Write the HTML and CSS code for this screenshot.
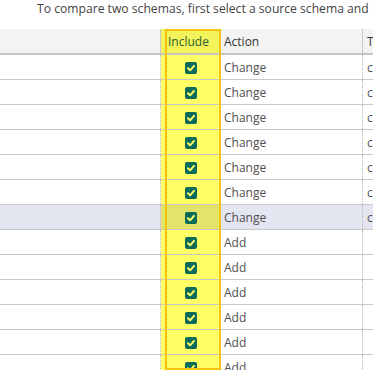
FILE: index.html
```html
<!DOCTYPE html>
<html>
<head>
<meta charset="utf-8">
<link rel="stylesheet" href="styles.css">
</head>
<body>
<div class="page">
  <p class="intro">To compare two schemas, first select a source schema and</p>
  <div class="grid-wrap">
    <div class="row head">
      <div class="cell c-name"></div>
      <div class="cell c-inc">Include</div>
      <div class="cell c-act">Action</div>
      <div class="cell c-type">T</div>
    </div>
    <div class="row"><div class="cell c-name"></div><div class="cell c-inc"><span class="chk"><svg viewBox="0 0 12 12"><path d="M3 6.3 L5.1 8.3 L9 3.9"/></svg></span></div><div class="cell c-act">Change</div><div class="cell c-type">c</div></div>
    <div class="row"><div class="cell c-name"></div><div class="cell c-inc"><span class="chk"><svg viewBox="0 0 12 12"><path d="M3 6.3 L5.1 8.3 L9 3.9"/></svg></span></div><div class="cell c-act">Change</div><div class="cell c-type">c</div></div>
    <div class="row"><div class="cell c-name"></div><div class="cell c-inc"><span class="chk"><svg viewBox="0 0 12 12"><path d="M3 6.3 L5.1 8.3 L9 3.9"/></svg></span></div><div class="cell c-act">Change</div><div class="cell c-type">c</div></div>
    <div class="row"><div class="cell c-name"></div><div class="cell c-inc"><span class="chk"><svg viewBox="0 0 12 12"><path d="M3 6.3 L5.1 8.3 L9 3.9"/></svg></span></div><div class="cell c-act">Change</div><div class="cell c-type">c</div></div>
    <div class="row"><div class="cell c-name"></div><div class="cell c-inc"><span class="chk"><svg viewBox="0 0 12 12"><path d="M3 6.3 L5.1 8.3 L9 3.9"/></svg></span></div><div class="cell c-act">Change</div><div class="cell c-type">c</div></div>
    <div class="row"><div class="cell c-name"></div><div class="cell c-inc"><span class="chk"><svg viewBox="0 0 12 12"><path d="M3 6.3 L5.1 8.3 L9 3.9"/></svg></span></div><div class="cell c-act">Change</div><div class="cell c-type">c</div></div>
    <div class="row selected"><div class="cell c-name"></div><div class="cell c-inc"><span class="chk"><svg viewBox="0 0 12 12"><path d="M3 6.3 L5.1 8.3 L9 3.9"/></svg></span></div><div class="cell c-act">Change</div><div class="cell c-type">c</div></div>
    <div class="row"><div class="cell c-name"></div><div class="cell c-inc"><span class="chk"><svg viewBox="0 0 12 12"><path d="M3 6.3 L5.1 8.3 L9 3.9"/></svg></span></div><div class="cell c-act">Add</div><div class="cell c-type"></div></div>
    <div class="row"><div class="cell c-name"></div><div class="cell c-inc"><span class="chk"><svg viewBox="0 0 12 12"><path d="M3 6.3 L5.1 8.3 L9 3.9"/></svg></span></div><div class="cell c-act">Add</div><div class="cell c-type"></div></div>
    <div class="row"><div class="cell c-name"></div><div class="cell c-inc"><span class="chk"><svg viewBox="0 0 12 12"><path d="M3 6.3 L5.1 8.3 L9 3.9"/></svg></span></div><div class="cell c-act">Add</div><div class="cell c-type"></div></div>
    <div class="row"><div class="cell c-name"></div><div class="cell c-inc"><span class="chk"><svg viewBox="0 0 12 12"><path d="M3 6.3 L5.1 8.3 L9 3.9"/></svg></span></div><div class="cell c-act">Add</div><div class="cell c-type"></div></div>
    <div class="row"><div class="cell c-name"></div><div class="cell c-inc"><span class="chk"><svg viewBox="0 0 12 12"><path d="M3 6.3 L5.1 8.3 L9 3.9"/></svg></span></div><div class="cell c-act">Add</div><div class="cell c-type"></div></div>
    <div class="row"><div class="cell c-name"></div><div class="cell c-inc"><span class="chk"><svg viewBox="0 0 12 12"><path d="M3 6.3 L5.1 8.3 L9 3.9"/></svg></span></div><div class="cell c-act">Add</div><div class="cell c-type"></div></div>
    <div class="hl-frame"></div>
  </div>
</div>
</body>
</html>
```

FILE: styles.css
```css
html, body {
  margin: 0;
  padding: 0;
  background: #ffffff;
  overflow: hidden;
}

.page {
  width: 373px;
  height: 370px;
  overflow: hidden;
  font-family: "Open Sans", "Noto Sans", sans-serif;
  font-size: 12px;
  color: #505050;
}

.intro {
  margin: 0;
  height: 29px;
  box-sizing: border-box;
  padding-left: 37px;
  padding-top: 1px;
  font-size: 12.15px;
  line-height: 16px;
  white-space: nowrap;
  color: #444444;
}

.grid-wrap {
  position: relative;
}

.row {
  display: grid;
  grid-template-columns: 161px 60px 142px 1fr;
  height: 25px;
  box-sizing: border-box;
  border-bottom: 1px solid #c8c8c8;
}

.cell {
  display: flex;
  align-items: center;
  box-sizing: border-box;
  white-space: nowrap;
  overflow: hidden;
}

.c-name {
  border-right: 1px dotted #b8b8b8;
}

.c-inc {
  justify-content: center;
  background: #ffff66;
  border-right: 1px dotted #d8b800;
}

.c-act {
  padding-left: 3px;
  border-right: 1px dotted #b8b8b8;
}

.c-type {
  padding-left: 4px;
}

.head {
  height: 26px;
  background: #f3f3f3;
  border-bottom: 2px solid #c4c4c4;
  color: #333333;
}

.head .c-name,
.head .c-act {
  border-right: 1px solid #c8c8c8;
}

.head .c-inc {
  background: #f2f25a;
  color: #2e5f2e;
  justify-content: flex-start;
  padding-left: 7px;
}

.selected {
  background: #e3e5f1;
}

.selected .c-inc {
  background: #e3e36a;
}

.chk {
  width: 12px;
  height: 12px;
  margin-top: 1px;
  border-radius: 2px;
  background: #0b6b5a;
  display: flex;
}

.chk svg {
  width: 12px;
  height: 12px;
}

.chk path {
  fill: none;
  stroke: #ffff66;
  stroke-width: 2;
  stroke-linecap: round;
  stroke-linejoin: round;
}

.hl-frame {
  position: absolute;
  left: 165px;
  top: 0;
  width: 56px;
  height: 341px;
  box-sizing: border-box;
  border: 2px solid #f3c20c;
  pointer-events: none;
}
```
